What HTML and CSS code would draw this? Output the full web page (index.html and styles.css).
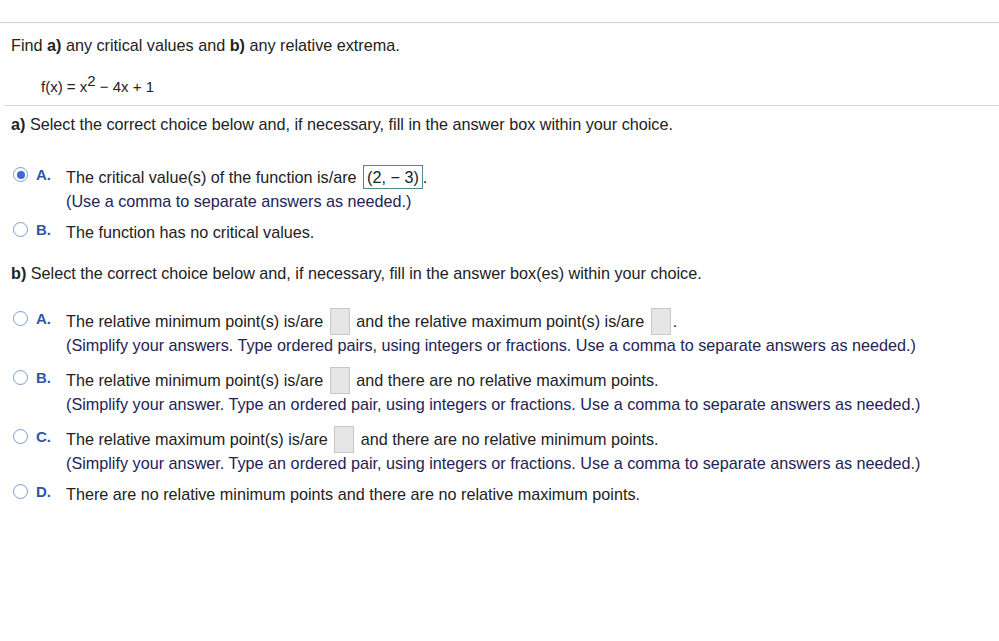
FILE: index.html
```html
<!DOCTYPE html>
<html lang="en">
<head>
    <meta charset="UTF-8">
    <link rel="stylesheet" href="styles.css">
    <title>Critical values and relative extrema</title>
</head>
<body>

<div class="question">
    <p class="prompt">Find <b>a)</b> any critical values and <b>b)</b> any relative extrema.</p>
    <p class="formula">f(x) = x<sup>2</sup> &minus; 4x + 1</p>
</div>

<div class="part">
    <p class="part-title"><b>a)</b> Select the correct choice below and, if necessary, fill in the answer box within your choice.</p>

    <div class="choices">
        <div class="choice">
            <span class="radio checked"></span>
            <span class="letter">A.</span>
            <div class="choice-body">
                <div class="line">The critical value(s) of the function is/are <span class="answer">(2, &minus; 3)</span>.</div>
                <div class="hint">(Use a comma to separate answers as needed.)</div>
            </div>
        </div>

        <div class="choice">
            <span class="radio"></span>
            <span class="letter">B.</span>
            <div class="choice-body">
                <div class="line">The function has no critical values.</div>
            </div>
        </div>
    </div>

    <p class="part-title part-b"><b>b)</b> Select the correct choice below and, if necessary, fill in the answer box(es) within your choice.</p>

    <div class="choices">
        <div class="choice">
            <span class="radio"></span>
            <span class="letter">A.</span>
            <div class="choice-body">
                <div class="line">The relative minimum point(s) is/are <span class="blank"></span> and the relative maximum point(s) is/are <span class="blank"></span>.</div>
                <div class="hint">(Simplify your answers. Type ordered pairs, using integers or fractions. Use a comma to separate answers as needed.)</div>
            </div>
        </div>

        <div class="choice spaced">
            <span class="radio"></span>
            <span class="letter">B.</span>
            <div class="choice-body">
                <div class="line">The relative minimum point(s) is/are <span class="blank"></span> and there are no relative maximum points.</div>
                <div class="hint">(Simplify your answer. Type an ordered pair, using integers or fractions. Use a comma to separate answers as needed.)</div>
            </div>
        </div>

        <div class="choice spaced">
            <span class="radio"></span>
            <span class="letter">C.</span>
            <div class="choice-body">
                <div class="line">The relative maximum point(s) is/are <span class="blank"></span> and there are no relative minimum points.</div>
                <div class="hint">(Simplify your answer. Type an ordered pair, using integers or fractions. Use a comma to separate answers as needed.)</div>
            </div>
        </div>

        <div class="choice">
            <span class="radio"></span>
            <span class="letter">D.</span>
            <div class="choice-body">
                <div class="line">There are no relative minimum points and there are no relative maximum points.</div>
            </div>
        </div>
    </div>
</div>

</body>
</html>
```

FILE: styles.css
```css
body {
    margin: 0;
    font-family: 'Liberation Sans', Arial, sans-serif;
    font-size: 16.2px;
    color: #222;
    background-color: #fff;
}

p {
    margin: 0;
}

.question {
    margin-top: 22px;
    border-top: 1px solid #cfcfcf;
    padding: 12px 0 8px 11px;
}

.prompt {
    line-height: 20px;
}

.formula {
    margin-top: 22px;
    padding-left: 30px;
    font-size: 15px;
    line-height: 20px;
}

.formula sup {
    font-size: 15px;
    line-height: 0;
    vertical-align: 6px;
}

.part {
    margin-left: 4px;
    border-top: 1px solid #d6d6d6;
    padding: 8px 0 0 7px;
}

.part-title {
    line-height: 20px;
}

.part-title.part-b {
    margin-top: 19px;
}

.choices {
    display: flex;
    flex-direction: column;
    gap: 7px;
    margin-top: 31px;
}

.part-b + .choices {
    margin-top: 26px;
}

.choice {
    display: flex;
    align-items: flex-start;
}

.choice.spaced {
    margin-top: 5px;
}

.choices .choice:last-child {
    margin-top: 1px;
}

.radio {
    width: 13px;
    height: 13px;
    margin: 2px 0 0 2px;
    border: 1.5px solid #7b9cd3;
    border-radius: 50%;
    flex-shrink: 0;
    position: relative;
    background-color: #fff;
}

.radio.checked::after {
    content: "";
    position: absolute;
    left: 2.5px;
    top: 2.5px;
    width: 8px;
    height: 8px;
    border-radius: 50%;
    background-color: #3a6ad4;
}

.letter {
    width: 30px;
    margin-left: 8px;
    font-weight: bold;
    font-size: 15px;
    color: #2f56a8;
    line-height: 19px;
}

.line {
    line-height: 24px;
}

.hint {
    color: #232356;
    line-height: 22px;
    padding-top: 1px;
}

.answer {
    display: inline-block;
    border: 1px solid #4e8a87;
    padding: 0 3px;
    line-height: 22px;
    margin-left: 2px;
}

.blank {
    display: inline-block;
    width: 18px;
    height: 25px;
    vertical-align: middle;
    background-color: #e6e6e6;
    border: 1px solid #c8c8c8;
    margin: -6px 2px -4px;
}
```
